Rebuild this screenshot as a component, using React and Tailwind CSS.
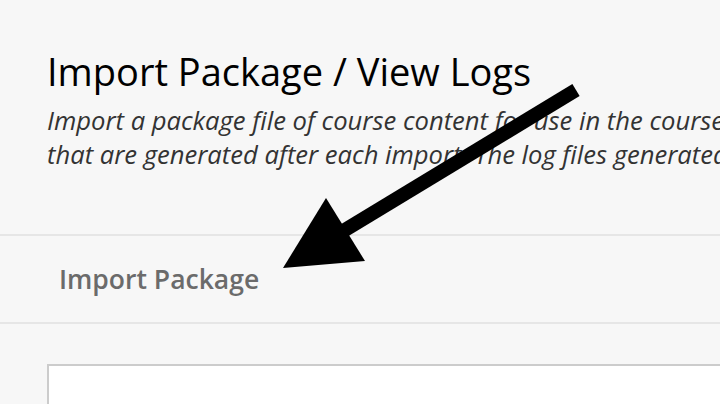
const App = () => {
  return (
    <div
      className="relative w-[720px] h-[404px] overflow-hidden bg-[#f7f7f7]"
      style={{ fontFamily: '"Open Sans", "Liberation Sans", sans-serif' }}
    >
      {/* page header */}
      <div className="pl-[47px] pt-[48px] h-[236px] border-b-2 border-[#e6e6e6]">
        <h1 className="text-[38px] leading-[46px] text-black whitespace-nowrap">
          Import Package / View Logs
        </h1>
        <p className="mt-[10px] text-[25.6px] leading-[34px] italic text-[#333] whitespace-nowrap">
          Import a package file of course content for use in the course. View the log files
          <br />
          that are generated after each import. The log files generated are saved for 30 days.
        </p>
      </div>

      {/* section heading */}
      <div className="pl-[59px] h-[88px] flex items-center border-b-2 border-[#e6e6e6]">
        <h2 className="text-[26.5px] font-semibold text-[#6b6b6b] pt-[2px]">Import Package</h2>
      </div>

      {/* form panel */}
      <div className="pl-[47px] pt-[40px]">
        <div className="h-[80px] bg-white border-t-2 border-l-2 border-[#cccccc]" />
      </div>

      {/* annotation arrow */}
      <svg className="absolute inset-0 pointer-events-none" width="720" height="404">
        <line x1="576" y1="90" x2="335" y2="236" stroke="#000" strokeWidth="14" strokeLinecap="butt" />
        <polygon points="283,268 326,198 365,261" fill="#000" />
      </svg>
    </div>
  );
};

export default App;
